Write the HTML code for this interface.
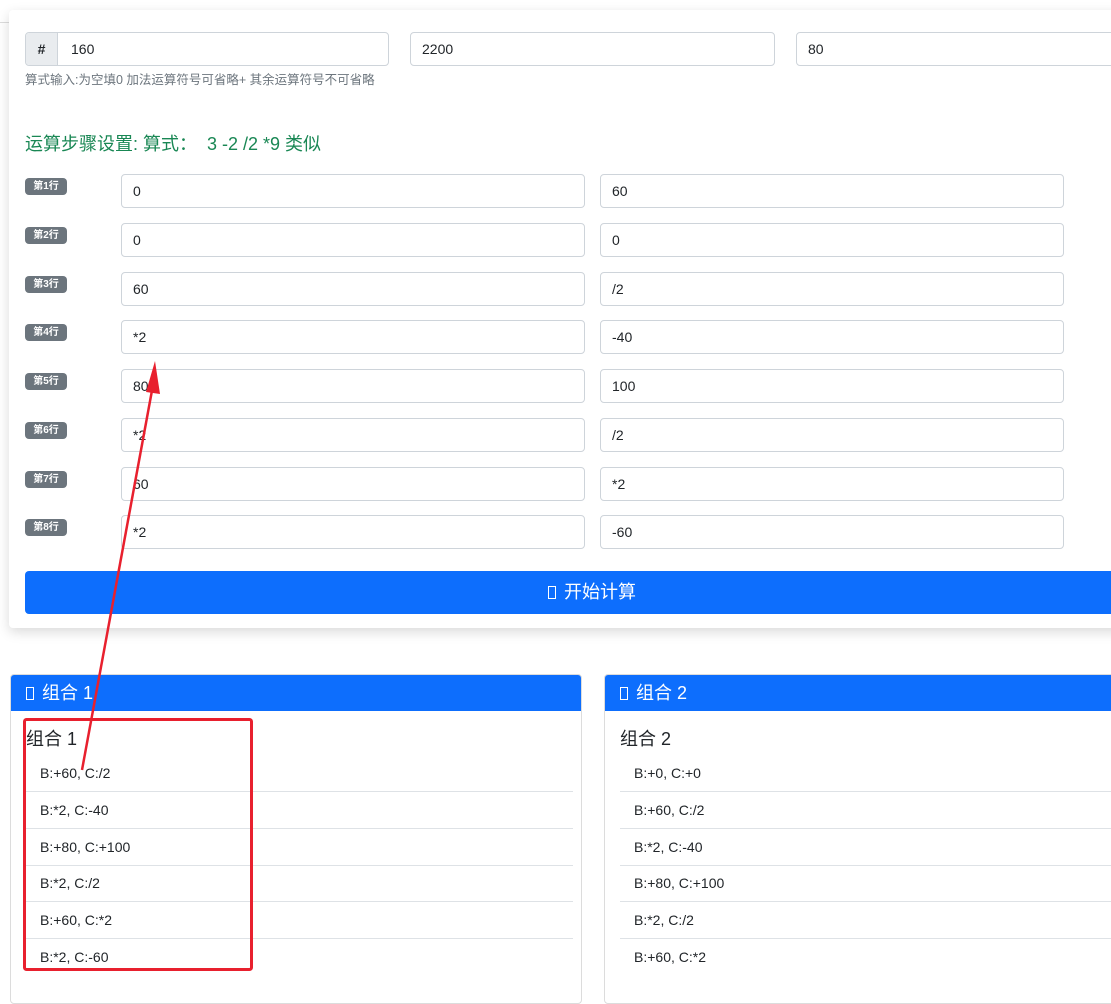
<!DOCTYPE html>
<html><head><meta charset="utf-8">
<style>
*{box-sizing:border-box;margin:0;padding:0}
body{width:1111px;height:982px;overflow:hidden;background:#fff;font-family:"Liberation Sans","Noto Sans CJK SC",sans-serif;color:#212529;position:relative;font-size:14px}
.abs{position:absolute}
.topline{left:0;top:0;width:1111px;height:23px;border-bottom:1px solid #dcdcdc;background:#fff}
.card{left:9px;top:10px;width:1120px;height:618px;background:#fff;box-shadow:0 4px 12px rgba(0,0,0,.15);border-radius:4px}
.inp{position:absolute;height:34px;border:1px solid #ced4da;border-radius:4px;background:#fff;padding-left:11px;line-height:32px;font-size:14px;color:#212529}
.badge{position:absolute;left:25px;width:42px;height:17px;background:#6c757d;color:#fff;border-radius:4px;font-size:10px;font-weight:bold;text-align:center;line-height:17px}
.ico{display:inline-block;width:8px;height:13px;border:1.5px solid #fff;vertical-align:-1px;margin-right:8px}
.gcard{position:absolute;top:674px;height:330px;border:1px solid #dcdcdc;border-radius:4px;background:#fff;overflow:hidden}
.gh{height:36px;background:#0d6efd;color:#fff;font-size:18px;line-height:36px;padding-left:15px}
.gt{position:absolute;left:15px;top:50px;font-size:18px}
.li{position:absolute;left:15px;width:547px;height:37px;border-bottom:1px solid #dee2e6;padding-left:14px;line-height:36px;font-size:14px}
</style></head><body>
<div class="abs topline"></div>
<div class="abs card"></div>
<div class="inp" style="left:25px;top:32px;width:364px;padding-left:45px">160</div>
<div class="abs" style="left:26px;top:33px;width:32px;height:32px;background:#e9ecef;border-right:1px solid #ced4da;text-align:center;line-height:32px;font-weight:bold;font-size:14px;border-radius:3px 0 0 3px">#</div>
<div class="inp" style="left:410px;top:32px;width:365px">2200</div>
<div class="inp" style="left:796px;top:32px;width:330px">80</div>
<div class="abs" style="left:25px;top:69px;font-size:12.5px;color:#6c757d">算式输入:为空填0 加法运算符号可省略+ 其余运算符号不可省略</div>
<div class="abs" style="left:25px;top:130px;font-size:18px;color:#198754">运算步骤设置: 算式：&nbsp; 3 -2 /2 *9 类似</div>

<div class="badge" style="top:178px">第1行</div><div class="inp" style="left:121px;top:174px;width:464px">0</div><div class="inp" style="left:600px;top:174px;width:464px">60</div>
<div class="badge" style="top:227px">第2行</div><div class="inp" style="left:121px;top:223px;width:464px">0</div><div class="inp" style="left:600px;top:223px;width:464px">0</div>
<div class="badge" style="top:276px">第3行</div><div class="inp" style="left:121px;top:272px;width:464px">60</div><div class="inp" style="left:600px;top:272px;width:464px">/2</div>
<div class="badge" style="top:324px">第4行</div><div class="inp" style="left:121px;top:320px;width:464px">*2</div><div class="inp" style="left:600px;top:320px;width:464px">-40</div>
<div class="badge" style="top:373px">第5行</div><div class="inp" style="left:121px;top:369px;width:464px">80</div><div class="inp" style="left:600px;top:369px;width:464px">100</div>
<div class="badge" style="top:422px">第6行</div><div class="inp" style="left:121px;top:418px;width:464px">*2</div><div class="inp" style="left:600px;top:418px;width:464px">/2</div>
<div class="badge" style="top:471px">第7行</div><div class="inp" style="left:121px;top:467px;width:464px">60</div><div class="inp" style="left:600px;top:467px;width:464px">*2</div>
<div class="badge" style="top:519px">第8行</div><div class="inp" style="left:121px;top:515px;width:464px">*2</div><div class="inp" style="left:600px;top:515px;width:464px">-60</div>

<div class="abs" style="left:25px;top:571px;width:1100px;height:43px;background:#0d6efd;border-radius:4px;color:#fff;font-size:18px;line-height:43px;padding-left:523px"><span class="ico"></span>开始计算</div>

<div class="gcard" style="left:10px;width:572px">
<div class="gh"><span class="ico"></span>组合 1</div>
<div class="gt">组合 1</div>
<div class="li" style="top:80px">B:+60, C:/2</div>
<div class="li" style="top:117px">B:*2, C:-40</div>
<div class="li" style="top:154px">B:+80, C:+100</div>
<div class="li" style="top:190px">B:*2, C:/2</div>
<div class="li" style="top:227px">B:+60, C:*2</div>
<div class="li" style="top:264px;border:none">B:*2, C:-60</div>
</div>
<div class="gcard" style="left:604px;width:530px">
<div class="gh"><span class="ico"></span>组合 2</div>
<div class="gt">组合 2</div>
<div class="li" style="top:80px">B:+0, C:+0</div>
<div class="li" style="top:117px">B:+60, C:/2</div>
<div class="li" style="top:154px">B:*2, C:-40</div>
<div class="li" style="top:190px">B:+80, C:+100</div>
<div class="li" style="top:227px">B:*2, C:/2</div>
<div class="li" style="top:264px;border:none">B:+60, C:*2</div>
</div>

<svg class="abs" style="left:0;top:0" width="1111" height="982">
<rect x="24.5" y="719.5" width="227" height="250" fill="none" stroke="#e8202e" stroke-width="3" rx="2"/>
<line x1="82" y1="770" x2="153" y2="385" stroke="#e8202e" stroke-width="2.5"/>
<polygon points="155,361 146,392 160,394" fill="#e8202e"/>
</svg>
</body></html>
